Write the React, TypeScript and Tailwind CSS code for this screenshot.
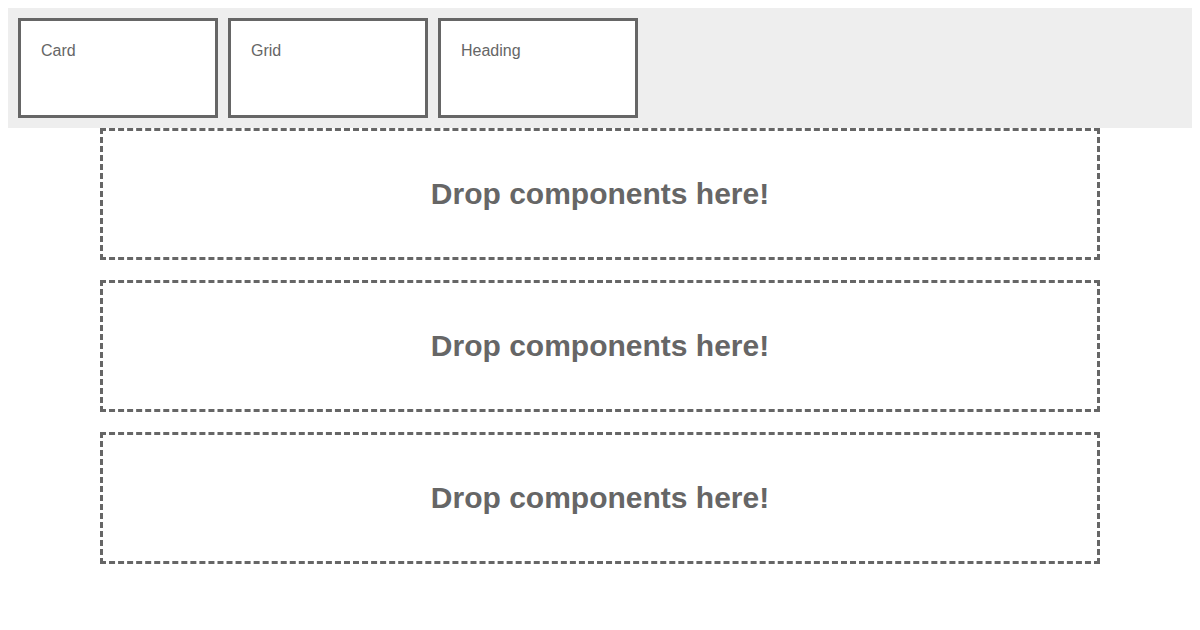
export default function App() {
  const items = ["Card", "Grid", "Heading"];
  return (
    <div className="m-2 font-['Liberation_Sans',Arial,sans-serif] text-[#666]">
      <div className="flex gap-[10px] bg-[#eeeeee] p-[10px]">
        {items.map((t) => (
          <div
            key={t}
            className="h-[100px] w-[200px] border-[3px] border-solid border-[#666] bg-white px-[20px] pt-[21px] text-[16px] leading-[18px]"
          >
            {t}
          </div>
        ))}
      </div>
      <div className="flex flex-col gap-[20px]">
        {[0, 1, 2].map((i) => (
          <div
            key={i}
            className="mx-auto flex h-[132px] w-[1000px] items-center justify-center border-[3px] border-dashed border-[#666]"
          >
            <span className="text-[30px] font-bold leading-[34px]">Drop components here!</span>
          </div>
        ))}
      </div>
    </div>
  );
}
